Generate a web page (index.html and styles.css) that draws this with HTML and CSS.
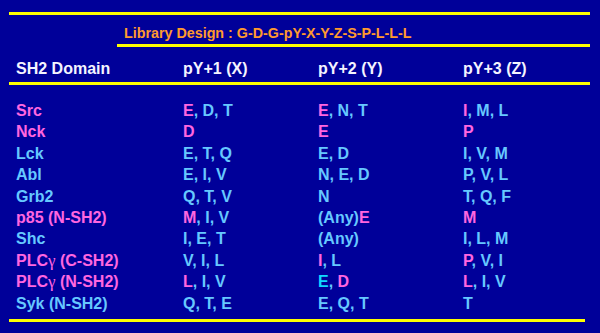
FILE: index.html
```html
<!DOCTYPE html>
<html>
<head>
<meta charset="utf-8">
<link rel="stylesheet" href="styles.css">
</head>
<body>
<div class="slide">
  <div class="rule rule-top"></div>
  <div class="title">Library Design : G-D-G-pY-X-Y-Z-S-P-L-L-L</div>
  <div class="rule rule-title"></div>
  <div class="grid head">
    <div>SH2 Domain</div>
    <div>pY+1 (X)</div>
    <div>pY+2 (Y)</div>
    <div>pY+3 (Z)</div>
  </div>
  <div class="rule rule-head"></div>
  <div class="grid body">
    <div class="pk">Src</div><div><span class="pk">E</span>, D, T</div><div><span class="pk">E</span>, N, T</div><div><span class="pk">I</span>, M, L</div>
    <div class="pk">Nck</div><div class="pk">D</div><div class="pk">E</div><div class="pk">P</div>
    <div>Lck</div><div>E, T, Q</div><div>E, D</div><div>I, V, M</div>
    <div>Abl</div><div>E, I, V</div><div>N, E, D</div><div>P, V, L</div>
    <div>Grb2</div><div>Q, T, V</div><div>N</div><div>T, Q, F</div>
    <div class="pk">p85 (N-SH2)</div><div><span class="pk">M</span>, I, V</div><div>(Any)<span class="pk">E</span></div><div class="pk">M</div>
    <div>Shc</div><div>I, E, T</div><div>(Any)</div><div>I, L, M</div>
    <div class="pk">PLC<span class="gamma">γ</span> (C-SH2)</div><div>V, I, L</div><div><span class="pk">I</span>, L</div><div><span class="pk">P</span>, V, I</div>
    <div class="pk">PLC<span class="gamma">γ</span> (N-SH2)</div><div><span class="pk">L</span>, I, V</div><div><span class="cy">E</span>, <span class="pk">D</span></div><div><span class="pk">L</span>, I, V</div>
    <div>Syk (N-SH2)</div><div>Q, T, E</div><div>E, Q, T</div><div>T</div>
  </div>
  <div class="rule rule-bottom"></div>
</div>
</body>
</html>
```

FILE: styles.css
```css
html, body {
  margin: 0;
  padding: 0;
  background: #000099;
}
.slide {
  width: 600px;
  height: 333px;
  background: #000099;
  font-family: "Liberation Sans", Arial, sans-serif;
  font-weight: bold;
  overflow: hidden;
}
.rule {
  height: 3px;
  background: #ffff00;
}
.rule-top {
  margin: 12px 10px 0 9px;
}
.title {
  margin-top: 9.5px;
  padding-left: 124px;
  font-size: 14.3px;
  line-height: 16px;
  color: #ff9a2e;
}
.rule-title {
  margin: 3px 10px 0 117px;
}
.grid {
  display: grid;
  grid-template-columns: 167px 135px 145px 1fr;
  padding-left: 16px;
  font-size: 16px;
}
.head {
  margin-top: 12.5px;
  line-height: 20px;
  color: #f4f4ff;
}
.rule-head {
  margin: 2.5px 10px 0 9px;
}
.body {
  margin-top: 15.5px;
  line-height: 21.4px;
  color: #66c8ff;
}
.pk {
  color: #ff66e0;
}
.cy {
  color: #10d8ff;
}
.gamma {
  font-family: "Liberation Serif", "DejaVu Serif", serif;
  font-weight: normal;
  font-size: 17px;
}
.rule-bottom {
  margin: 4.5px 15px 0 9px;
}
```
